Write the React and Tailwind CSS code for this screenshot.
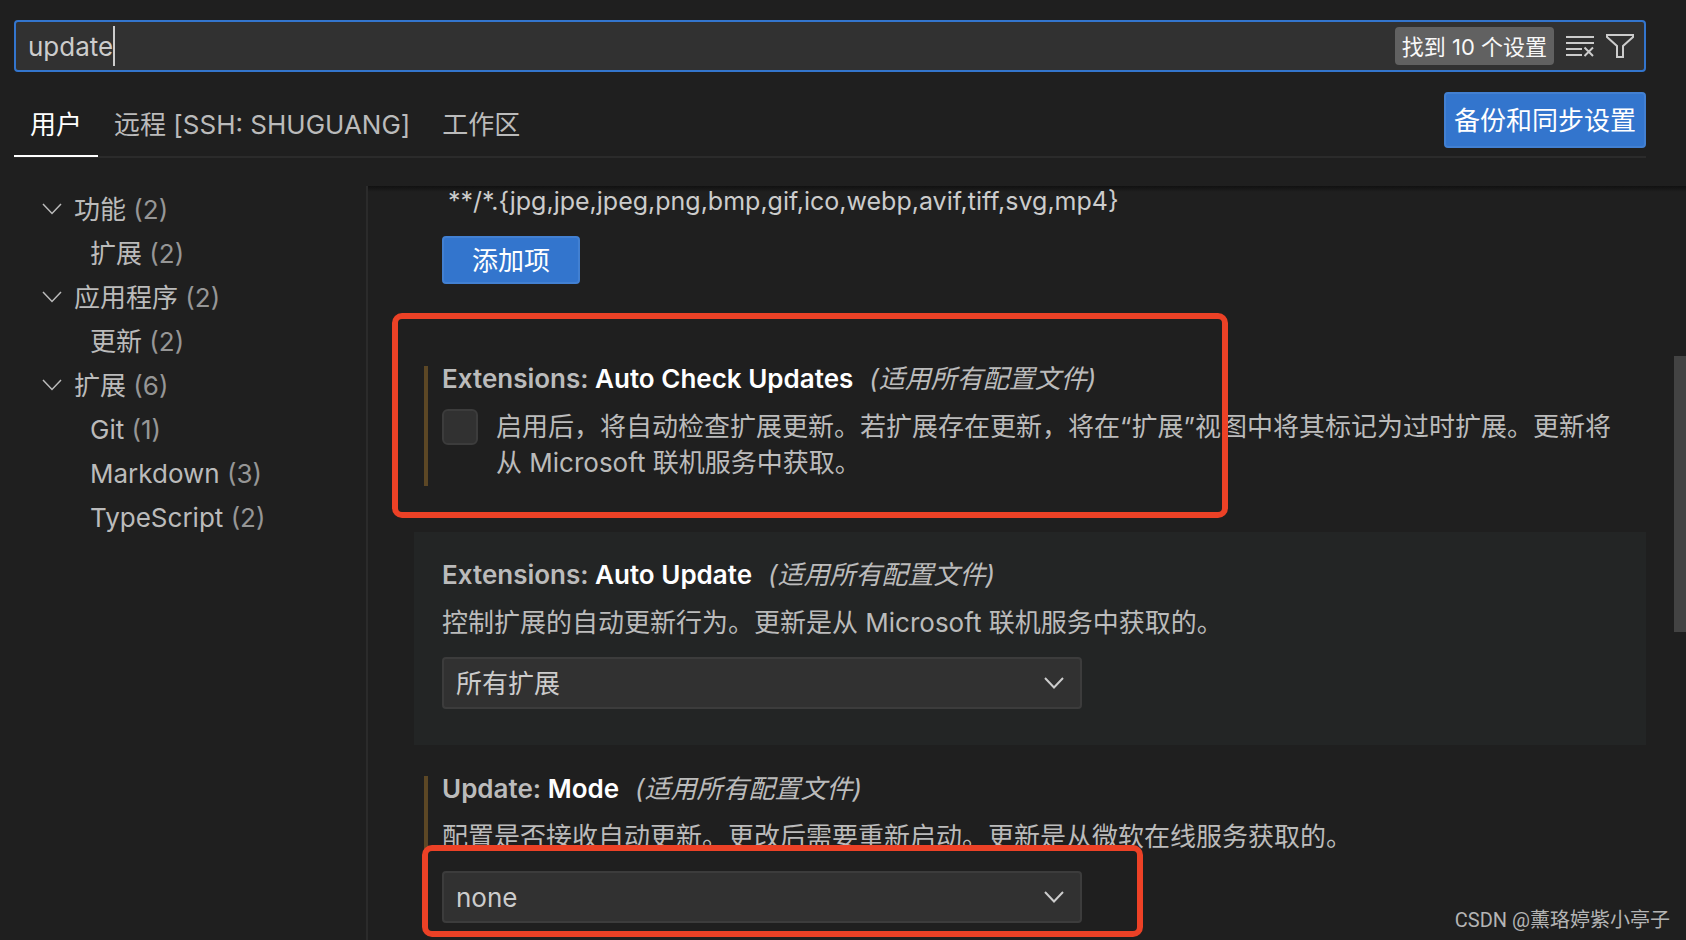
import { useState } from 'react'

const tabs = ['用户', '远程 [SSH: SHUGUANG]', '工作区']

const tree = [
    { label: '功能', count: 2, children: [{ label: '扩展', count: 2 }] },
    { label: '应用程序', count: 2, children: [{ label: '更新', count: 2 }] },
    {
        label: '扩展',
        count: 6,
        children: [
            { label: 'Git', count: 1 },
            { label: 'Markdown', count: 3 },
            { label: 'TypeScript', count: 2 },
        ],
    },
]

function ClearIcon() {
    return (
        <svg width="28" height="28" viewBox="0 0 28 28" fill="none" stroke="currentColor" strokeWidth="2">
            <path d="M0 5H28M0 11H28M0 17H16M0 23H16" />
            <path d="M18.5 15.5L27 24M27 15.5L18.5 24" />
        </svg>
    )
}

function FilterIcon() {
    return (
        <svg width="28" height="28" viewBox="0 0 28 28" fill="none" stroke="currentColor" strokeWidth="2">
            <path d="M1 3H27V5L17 14V25H11V14L1 5Z" />
        </svg>
    )
}

function Chevron({ className, strokeWidth = 2 }) {
    return (
        <svg
            width="20"
            height="12"
            viewBox="0 0 20 12"
            fill="none"
            stroke="currentColor"
            strokeWidth={strokeWidth}
            className={className}
        >
            <path d="M1 1L10 10.5L19 1" />
        </svg>
    )
}

function Count({ value }) {
    return <span className="text-[#969696]"> ({value})</span>
}

function SettingTitle({ category, name }) {
    return (
        <h3 className="text-[26px] leading-9 font-semibold text-[#bbbbbb] whitespace-nowrap">
            {category}: <span className="text-white">{name}</span>
            <em className="ml-4 font-normal">(适用所有配置文件)</em>
        </h3>
    )
}

function SettingSelect({ id, label, options }) {
    return (
        <div className="relative mt-4 w-full max-w-[640px]">
            <select
                id={id}
                aria-label={label}
                className="w-full h-[52px] pt-0.5 pl-3 pr-12 appearance-none rounded-sm border-2 border-[#3c3c3c] bg-[#313131] text-[#cccccc] outline-none"
            >
                {options.map((option) => (
                    <option key={option}>{option}</option>
                ))}
            </select>
            <Chevron className="absolute right-[18px] top-5 text-[#cccccc] pointer-events-none" />
        </div>
    )
}

export default function App() {
    const [query, setQuery] = useState('update')
    const [activeTab, setActiveTab] = useState(0)
    const [autoCheck, setAutoCheck] = useState(false)

    return (
        <div className="relative h-screen flex flex-col overflow-hidden bg-[#1f1f1f] text-[#bbbbbb] text-[26px] leading-9 font-['Inter','Noto_Sans_CJK_SC',sans-serif]">
            {/* HEADER */}
            <header className="shrink-0 pt-5 pl-3.5 pr-10">
                <div className="flex items-center h-[52px] pl-3 pr-2.5 rounded-sm border-2 border-[#3375cd] bg-[#313131] text-[#cccccc]">
                    <input
                        type="text"
                        aria-label="搜索设置"
                        value={query}
                        onChange={(e) => setQuery(e.target.value)}
                        className="field-sizing-content pt-0.5 bg-transparent outline-none caret-transparent"
                    />
                    <span className="w-0.5 h-10 bg-[#cccccc]" />
                    <div className="ml-auto flex items-center gap-3">
                        <span className="flex items-center h-[38px] pt-0.5 px-[7px] rounded-sm bg-[#616161] text-[22px] text-[#f8f8f8] whitespace-nowrap">
                            找到 10 个设置
                        </span>
                        <button type="button" aria-label="清除搜索">
                            <ClearIcon />
                        </button>
                        <button type="button" aria-label="筛选">
                            <FilterIcon />
                        </button>
                    </div>
                </div>

                <div className="mt-5 flex justify-between items-start border-b-2 border-[#2b2b2b]">
                    <nav className="flex h-16">
                        {tabs.map((tab, index) => (
                            <button
                                key={tab}
                                type="button"
                                onClick={() => setActiveTab(index)}
                                className={
                                    index === activeTab
                                        ? 'h-[65px] pt-0.5 px-4 border-b-2 border-white text-white whitespace-nowrap'
                                        : 'h-[65px] pt-0.5 px-4 border-b-2 border-transparent whitespace-nowrap'
                                }
                            >
                                {tab}
                            </button>
                        ))}
                    </nav>
                    <button
                        type="button"
                        className="h-14 pt-0.5 px-2 rounded-sm border-2 border-[#4280d2] bg-[#3375cd] text-white whitespace-nowrap"
                    >
                        备份和同步设置
                    </button>
                </div>
            </header>

            <div className="flex flex-1 min-h-0 mt-7">
                {/* TABLE OF CONTENTS */}
                <aside className="w-[368px] shrink-0 border-r-2 border-[#2b2b2b] pt-px">
                    <ul>
                        {tree.map((group) => (
                            <li key={group.label}>
                                <a href="#" className="flex items-center h-11 pl-[42px]">
                                    <Chevron strokeWidth={1.5} className="mr-3" />
                                    <span className="pt-px whitespace-pre">
                                        {group.label}
                                        <Count value={group.count} />
                                    </span>
                                </a>
                                <ul>
                                    {group.children.map((child) => (
                                        <li key={child.label}>
                                            <a href="#" className="flex items-center h-11 pt-px pl-[90px] whitespace-pre">
                                                {child.label}
                                                <Count value={child.count} />
                                            </a>
                                        </li>
                                    ))}
                                </ul>
                            </li>
                        ))}
                    </ul>
                </aside>

                {/* SETTINGS LIST */}
                <main className="relative flex-1 min-w-0 overflow-hidden pl-[46px] pr-10">
                    <div className="absolute inset-x-0 top-0 h-1.5 bg-linear-to-b from-[#111111] to-[#1f1f1f]" />

                    <section className="relative h-[150px] pl-7">
                        <p className="pl-1.5 text-[#cccccc] text-[25px] leading-[30px]">
                            **/*.&#123;jpg,jpe,jpeg,png,bmp,gif,ico,webp,avif,tiff,svg,mp4&#125;
                        </p>
                        <button
                            type="button"
                            className="mt-5 h-12 pt-0.5 px-7 rounded-sm border-2 border-[#4280d2] bg-[#3375cd] text-white"
                        >
                            添加项
                        </button>
                    </section>

                    <section className="relative h-[196px] pt-[25px] pl-7">
                        <div className="absolute left-2.5 top-[30px] w-1 h-[120px] bg-[#5c4725]" />
                        <SettingTitle category="Extensions" name="Auto Check Updates" />
                        <div className="flex items-start mt-3 gap-[18px] pr-7">
                            <input
                                id="auto-check"
                                type="checkbox"
                                checked={autoCheck}
                                onChange={(e) => setAutoCheck(e.target.checked)}
                                className="size-9 shrink-0 appearance-none rounded-md border-2 border-[#3c3c3c] bg-[#313131] checked:bg-[#3375cd]"
                            />
                            <label htmlFor="auto-check">
                                启用后，将自动检查扩展更新。若扩展存在更新，将在“扩展”视图中将其标记为过时扩展。更新将从 Microsoft 联机服务中获取。
                            </label>
                        </div>
                        <div className="absolute -left-[22px] -top-[23px] w-[836px] h-[205px] rounded-[10px] border-6 border-[#ec4126] pointer-events-none" />
                    </section>

                    <section className="h-[213px] pt-[25px] pl-7 bg-[#232525]">
                        <SettingTitle category="Extensions" name="Auto Update" />
                        <p className="mt-3">控制扩展的自动更新行为。更新是从 Microsoft 联机服务中获取的。</p>
                        <SettingSelect
                            id="auto-update"
                            label="Extensions: Auto Update"
                            options={['所有扩展', '仅启用的扩展', '无']}
                        />
                    </section>

                    <section className="relative h-[213px] pt-[26px] pl-7">
                        <div className="absolute left-2.5 top-[31px] w-1 h-[147px] bg-[#5c4725]" />
                        <SettingTitle category="Update" name="Mode" />
                        <p className="mt-3">配置是否接收自动更新。更改后需要重新启动。更新是从微软在线服务获取的。</p>
                        <SettingSelect
                            id="update-mode"
                            label="Update: Mode"
                            options={['none', 'manual', 'start', 'default']}
                        />
                        <div className="absolute left-2 top-[100px] w-[721px] h-[92px] rounded-[10px] border-6 border-[#ec4126] pointer-events-none" />
                    </section>

                    {/* Scrollbar thumb */}
                    <div className="absolute right-0 top-[170px] w-3 h-[276px] bg-[#434343]" />
                </main>
            </div>

            <span className="absolute right-4 bottom-0.5 text-xl leading-9 text-[#b4b4b4] font-['Roboto','Noto_Sans_CJK_SC',sans-serif]">
                CSDN @薰珞婷紫小亭子
            </span>
        </div>
    )
}
